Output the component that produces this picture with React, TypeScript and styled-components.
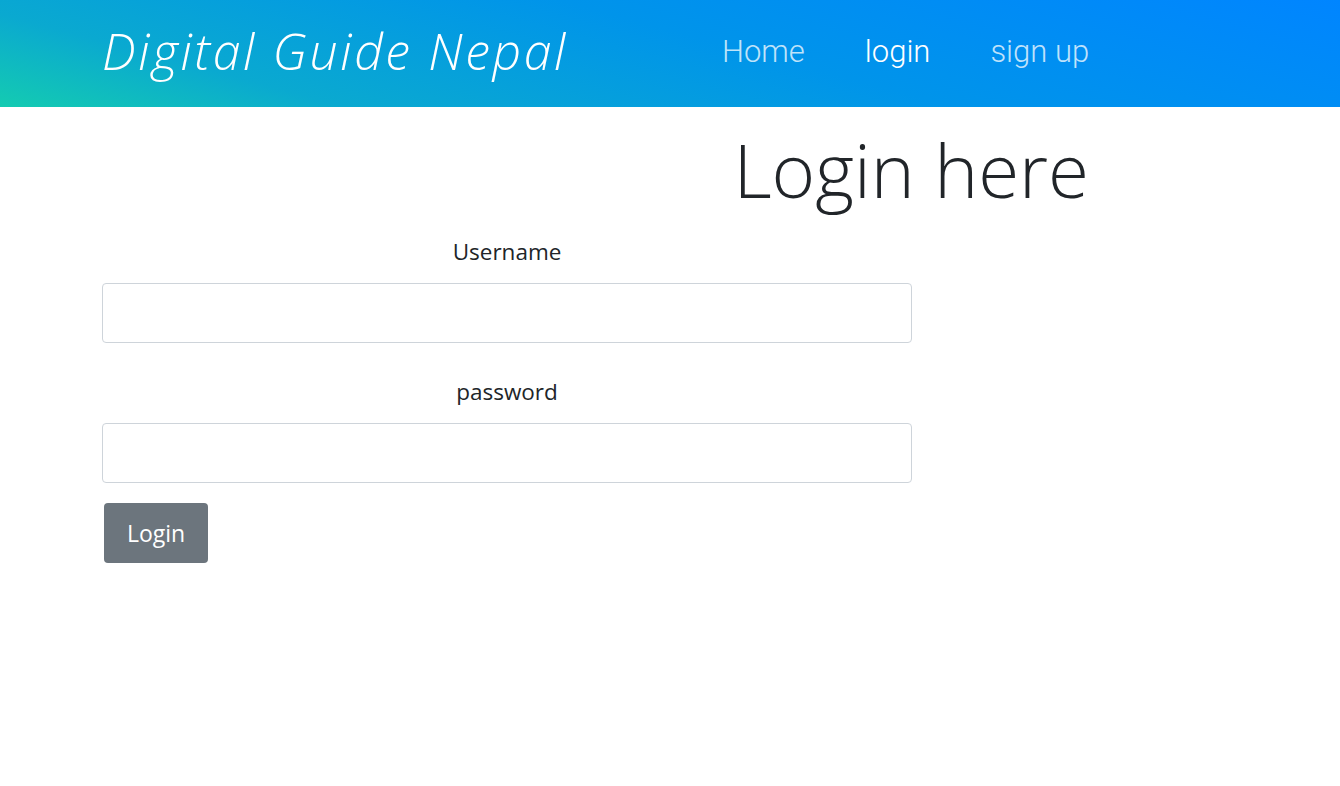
import styled, { createGlobalStyle } from 'styled-components'
import { useState } from 'react'

const GlobalStyle = createGlobalStyle`
    body {
        margin: 0;
        background: #fff;
        font-family: "Open Sans", "Noto Sans", sans-serif;
        color: #212529;
    }
`

const Header = styled.header`
    height: 107px;
    display: flex;
    align-items: center;
    padding-left: 102px;
    background: linear-gradient(195deg, #0085ff 0%, #0094ea 45%, #0aa9d0 80%, #14cbb1 100%);
`

const Brand = styled.a`
    font-family: "Open Sans", "Lato", sans-serif;
    font-style: italic;
    font-weight: 300;
    font-size: 50px;
    letter-spacing: 2.6px;
    line-height: 1.2;
    color: #fff;
    text-decoration: none;
    width: 620px;
    margin-top: -6px;
`

const Nav = styled.nav`
    display: flex;
    gap: 60px;
    margin-top: -4px;
`

const NavLink = styled.a<{ $active?: boolean }>`
    font-family: Roboto, "Open Sans", sans-serif;
    font-weight: 300;
    font-size: 31px;
    color: ${p => (p.$active ? '#fff' : 'rgba(255,255,255,0.75)')};
    text-decoration: none;
`

const Main = styled.main`
    width: 987px;
    margin-left: 102px;
`

const Title = styled.h1`
    margin: 18px 0 0;
    font-weight: 300;
    font-size: 74.5px;
    line-height: 1.2;
    text-align: right;
`

const Form = styled.form`
    width: 810px;
    display: flex;
    flex-direction: column;
    margin-top: 21px;
`

const Field = styled.div`
    display: flex;
    flex-direction: column;
    margin-bottom: 32px;

    &:last-of-type {
        margin-bottom: 20px;
    }
`

const Label = styled.label`
    text-align: center;
    font-size: 22.5px;
    line-height: 33px;
    margin-bottom: 15px;
`

const Input = styled.input`
    height: 60px;
    box-sizing: border-box;
    border: 1px solid #ced4da;
    border-radius: 4px;
    font-size: 20px;
    padding: 0 12px;
    outline: none;
`

const Button = styled.button`
    width: 104px;
    height: 60px;
    margin-left: 2px;
    border: none;
    border-radius: 4px;
    background: #6c757d;
    color: #fff;
    font-family: "Open Sans", sans-serif;
    font-size: 23px;
    cursor: pointer;
`

const App: React.FC = () => {
    const [username, setUsername] = useState('')
    const [password, setPassword] = useState('')

    return (
        <>
            <GlobalStyle />
            <Header>
                <Brand href='#'>Digital Guide Nepal</Brand>
                <Nav>
                    <NavLink href='#'>Home</NavLink>
                    <NavLink href='#' $active>login</NavLink>
                    <NavLink href='#'>sign up</NavLink>
                </Nav>
            </Header>
            <Main>
                <Title>Login here</Title>
                <Form onSubmit={e => e.preventDefault()}>
                    <Field>
                        <Label>Username</Label>
                        <Input value={username} onChange={e => setUsername(e.target.value)} />
                    </Field>
                    <Field>
                        <Label>password</Label>
                        <Input type='password' value={password} onChange={e => setPassword(e.target.value)} />
                    </Field>
                    <Button type='submit'>Login</Button>
                </Form>
            </Main>
        </>
    )
}

export default App
